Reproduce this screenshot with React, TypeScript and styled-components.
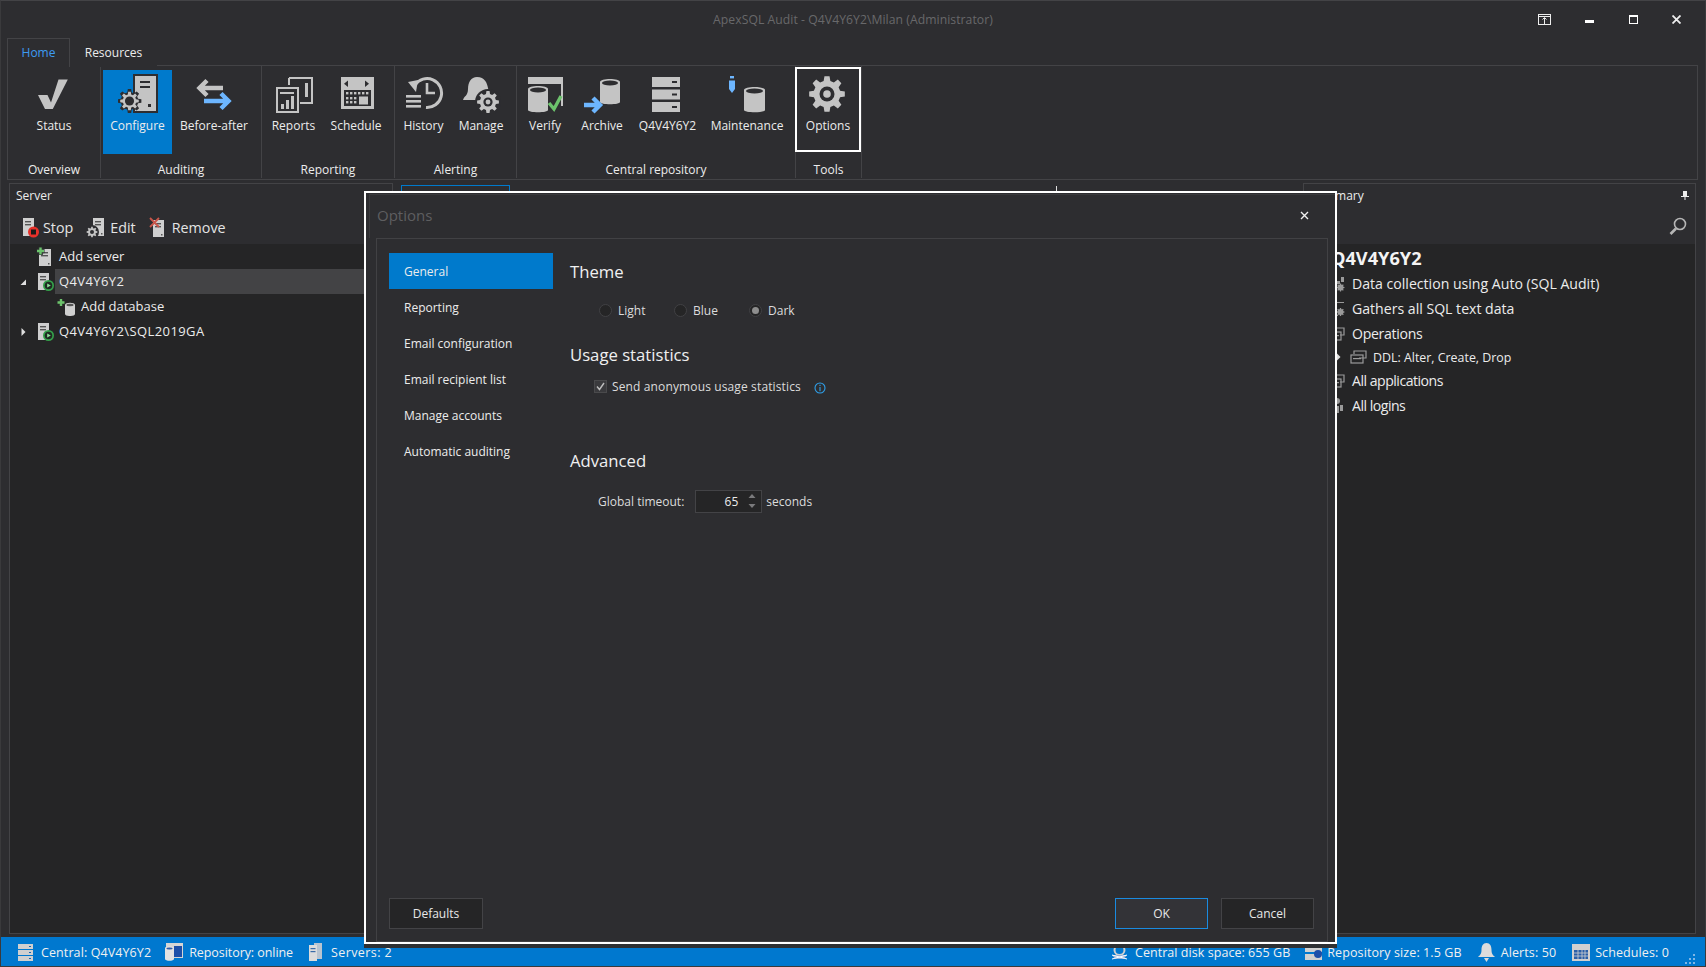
import React from "react";
import styled, { createGlobalStyle } from "styled-components";

const G = "#c4c4c4";
const D = "#2d2d30";
const BLUE = "#6db6ff";
const GREEN = "#6cc26c";

const Global = createGlobalStyle`
  html, body { margin: 0; padding: 0; background: #2d2d30; overflow: hidden; }
  * { box-sizing: border-box; }
  body { font-family: "Open Sans", "Noto Sans", "Liberation Sans", sans-serif; color: #ececec; }
`;

const gearPath = (cx: number, cy: number, ro: number, ri: number, n: number) => {
  const pts: string[] = [];
  const step = (Math.PI * 2) / n;
  for (let i = 0; i < n; i++) {
    const a = i * step - Math.PI / 2;
    const p = (r: number, t: number) =>
      `${(cx + r * Math.cos(a + t * step)).toFixed(2)} ${(cy + r * Math.sin(a + t * step)).toFixed(2)}`;
    pts.push(p(ri, -0.32), p(ro, -0.18), p(ro, 0.18), p(ri, 0.32));
  }
  return "M" + pts.join("L") + "Z";
};

const Gear = ({ cx, cy, r, fill = G, hole = D, outline }: { cx: number; cy: number; r: number; fill?: string; hole?: string; outline?: string }) => (
  <g>
    <path d={gearPath(cx, cy, r, r * 0.74, 8)} fill={outline ? outline : fill} />
    {outline && <path d={gearPath(cx, cy, r * 0.78, r * 0.56, 8)} fill={fill} />}
    <circle cx={cx} cy={cy} r={r * (outline ? 0.38 : 0.42)} fill={hole} />
    {!outline && <circle cx={cx} cy={cy} r={r * 0.22} fill={fill} />}
  </g>
);

const Cylinder = ({ x, y, w, h, fill = G }: { x: number; y: number; w: number; h: number; fill?: string }) => (
  <g>
    <path d={`M${x} ${y + 3}C${x} ${y - 1} ${x + w} ${y - 1} ${x + w} ${y + 3}V${y + h - 2}C${x + w} ${y + h + 1} ${x} ${y + h + 1} ${x} ${y + h - 2}Z`} fill={fill} />
    <ellipse cx={x + w / 2} cy={y + 4} rx={w / 2 - 2} ry={2.4} fill={D} />
  </g>
);

const RibbonIcon = styled.svg`
  display: block;
  width: 40px;
  height: 40px;
  flex: none;
`;

const StatusIcon = () => (
  <RibbonIcon viewBox="0 0 40 40">
    <path d="M4 21H13.5L17 28.5L24.5 5.5H33.8L18.8 35H11Z" fill={G} />
  </RibbonIcon>
);
const ConfigureIcon = () => (
  <RibbonIcon viewBox="0 0 40 40">
    <rect x="15" y="0" width="25" height="39" fill={D} />
    <rect x="17" y="2" width="21" height="35" fill={G} />
    <rect x="22" y="7" width="10" height="2" fill={D} />
    <rect x="22" y="12" width="10" height="2" fill={D} />
    <rect x="30" y="30" width="3" height="3" fill={D} />
    <Gear cx={11.5} cy={27} r={12} outline={D} hole={D} />
  </RibbonIcon>
);
const BeforeAfterIcon = () => (
  <RibbonIcon viewBox="0 0 40 40">
    <path d="M29 14H7M13 6.5L5.5 14L13 21.5" fill="none" stroke={G} strokeWidth="4.5" />
    <path d="M10 27H35M27 19.5L34.5 27L27 34.5" fill="none" stroke={BLUE} strokeWidth="4.5" />
  </RibbonIcon>
);
const ReportsIcon = () => (
  <RibbonIcon viewBox="0 0 40 40">
    <path d="M15 4H38V29H26" fill="none" stroke={G} strokeWidth="2" />
    <path d="M15 4V11" fill="none" stroke={G} strokeWidth="2" />
    <rect x="31" y="9" width="3" height="14" fill={G} />
    <rect x="3" y="14" width="21" height="24" fill={D} stroke={G} strokeWidth="2" />
    <rect x="6" y="18" width="14" height="2" fill={G} />
    <rect x="17" y="22" width="3" height="13" fill={G} />
    <rect x="12" y="26" width="3" height="9" fill={G} />
    <rect x="7" y="30" width="3" height="5" fill={G} />
  </RibbonIcon>
);
const ScheduleIcon = () => (
  <RibbonIcon viewBox="0 0 40 40">
    <rect x="5" y="3" width="33" height="32" fill={G} />
    <path d="M12 6.5L12 13L8 9.7Z" fill={D} />
    <path d="M29 6.5L29 13L33 9.7Z" fill={D} />
    <rect x="8" y="16" width="27" height="16" fill={D} />
    {[10, 14, 18, 22, 26, 30].map((x) => (
      <rect key={x} x={x} y="18" width="2.4" height="2.4" fill={G} />
    ))}
    {[10, 14, 18].map((x) => (
      <rect key={x} x={x} y="23" width="2.4" height="2.4" fill={G} />
    ))}
    {[10, 14, 18].map((x) => (
      <rect key={x} x={x} y="27" width="2.4" height="2.4" fill={G} />
    ))}
    <rect x="23" y="22.5" width="9" height="8" fill={G} />
  </RibbonIcon>
);
const HistoryIcon = () => (
  <RibbonIcon viewBox="0 0 40 40">
    <path d="M11 11A14.5 14.5 0 1 1 22 33.5" fill="none" stroke={G} strokeWidth="3" />
    <path d="M4 8L14 6L12 18Z" fill={G} />
    <path d="M23 9V19H31" fill="none" stroke={G} strokeWidth="2.6" />
    <rect x="2" y="21" width="15" height="2.6" fill={G} />
    <rect x="2" y="26" width="15" height="2.6" fill={G} />
    <rect x="2" y="31" width="15" height="2.6" fill={G} />
  </RibbonIcon>
);
const ManageIcon = () => (
  <RibbonIcon viewBox="0 0 40 40">
    <path d="M16 3C24 3 26 9 27 14C28 20 31 22 32 26H2C3 22 7 22 7 15C7 8 10 3 16 3Z" fill={G} />
    <circle cx="27" cy="28" r="13" fill={D} />
    <Gear cx={27} cy={28} r={11} />
  </RibbonIcon>
);
const VerifyIcon = () => (
  <RibbonIcon viewBox="0 0 40 40">
    <rect x="3" y="3" width="35" height="7" fill={G} />
    <path d="M37 10V32" stroke={G} strokeWidth="2" />
    <Cylinder x={3} y={12} w={20} h={26} />
    <path d="M24 29L29 35L36 22" fill="none" stroke={GREEN} strokeWidth="3.4" />
  </RibbonIcon>
);
const ArchiveIcon = () => (
  <RibbonIcon viewBox="0 0 40 40">
    <Cylinder x={18} y={5} w={20} h={25} />
    <path d="M2 31H16M11 24L18 31L11 38" fill="none" stroke={BLUE} strokeWidth="4.4" />
  </RibbonIcon>
);
const CentralIcon = () => (
  <RibbonIcon viewBox="0 0 40 40">
    {[3, 15.5, 28].map((y) => (
      <g key={y}>
        <rect x="4" y={y} width="28" height="10" fill={G} />
        <rect x="24" y={y + 4} width="5" height="2" fill={D} />
      </g>
    ))}
  </RibbonIcon>
);
const MaintenanceIcon = () => (
  <RibbonIcon viewBox="0 0 40 40">
    <rect x="3" y="2" width="4" height="2.4" fill={BLUE} />
    <path d="M2 6.5H8V15L5 19L2 15Z" fill={BLUE} />
    <Cylinder x={17} y={13} w={21} h={25} />
  </RibbonIcon>
);
const OptionsIcon = () => (
  <RibbonIcon viewBox="0 0 40 40">
    <path d={gearPath(19, 20, 18, 13.5, 8)} fill={G} />
    <circle cx="19" cy="20" r="7.5" fill={D} />
    <circle cx="19" cy="20" r="3.8" fill={G} />
  </RibbonIcon>
);

const SmallSvg = styled.svg<{ $w?: number; $h?: number }>`
  display: block;
  flex: none;
  width: ${(p) => p.$w ?? 18}px;
  height: ${(p) => p.$h ?? 20}px;
`;

const ServerShape = ({ x = 0, y = 0, w = 12, h = 18 }: { x?: number; y?: number; w?: number; h?: number }) => (
  <g>
    <rect x={x} y={y} width={w} height={h} fill="#cfcfcf" />
    <rect x={x + 2} y={y + 3} width={w - 5} height="1.4" fill="#555" />
    <rect x={x + 2} y={y + 6} width={w - 5} height="1.4" fill="#555" />
    <rect x={x + w - 3} y={y + h - 3} width="1.5" height="1.5" fill="#555" />
  </g>
);

const StopIcon = () => (
  <SmallSvg $w={16} $h={21} viewBox="0 0 16 21">
    <ServerShape x={0} y={1} w={11} h={18} />
    <circle cx="10.5" cy="15" r="5.5" fill="#e8312a" />
    <rect x="8" y="12.5" width="5" height="5" fill="#1a1a1a" />
  </SmallSvg>
);
const EditIcon = () => (
  <SmallSvg $w={19} $h={21} viewBox="0 0 19 21">
    <ServerShape x={7} y={1} w={11} h={18} />
    <circle cx="6" cy="15" r="7" fill="#2d2d30" />
    <path d={gearPath(6, 15, 5.4, 4, 8)} fill={G} />
    <circle cx="6" cy="15" r="2" fill="#2d2d30" />
  </SmallSvg>
);
const RemoveIcon = () => (
  <SmallSvg $w={16} $h={21} viewBox="0 0 16 21">
    <ServerShape x={4} y={3} w={11} h={17} />
    <path d="M1 1L10 10M10 1L1 10" stroke="#c9564a" strokeWidth="1.8" />
  </SmallSvg>
);
const AddServerIcon = () => (
  <SmallSvg $w={16} $h={19} viewBox="0 0 16 19">
    <ServerShape x={3} y={2} w={12} h={17} />
    <path d="M4.5 0V8M.5 4H8.5" stroke="#2d2d30" strokeWidth="4.6" />
    <path d="M4.5 .5V7.5M1 4H8" stroke={GREEN} strokeWidth="2.4" />
  </SmallSvg>
);
const RunServerIcon = () => (
  <SmallSvg $w={16} $h={19} viewBox="0 0 16 19">
    <ServerShape x={0} y={1} w={11} h={17} />
    <circle cx="10.5" cy="13.5" r="5.5" fill="#35a04a" />
    <circle cx="10.5" cy="13.5" r="3.8" fill="#1f2a22" />
    <path d="M9.2 11.4L12.8 13.5L9.2 15.6Z" fill="#8fe09a" />
  </SmallSvg>
);
const AddDbIcon = () => (
  <SmallSvg $w={19} $h={18} viewBox="0 0 19 18">
    <path d="M4 1V8M.5 4.5H7.5" stroke={GREEN} strokeWidth="2.4" />
    <path d="M8 7C8 4 18 4 18 7V16C18 18.7 8 18.7 8 16Z" fill="#cfcfcf" />
    <ellipse cx="13" cy="7" rx="3.6" ry="1.2" fill="#555" />
  </SmallSvg>
);

const StripIcon = ({ w, h, children }: { w: number; h: number; children: React.ReactNode }) => (
  <SmallSvg $w={w} $h={h} viewBox={`0 0 ${w} ${h}`}>
    {children}
  </SmallSvg>
);

const tree12 = "#9a9a9a";
const DataIcon = () => (
  <StripIcon w={14} h={16}>
    <path d="M1 2h3v5H1zM6 5h3v3H6zM10 1h3v5h-3zM1 9h3v5H1z" fill={tree12} />
    <path d={gearPath(9.5, 11.5, 4, 3, 8)} fill={tree12} />
  </StripIcon>
);
const TextIcon = () => (
  <StripIcon w={14} h={16}>
    <path d="M1 1h12v1H1zM1 14h6v1H1zM1 4h5v1H1zM1 7h4v1H1z" fill={tree12} />
    <path d={gearPath(9.5, 11, 4, 3, 8)} fill={tree12} />
  </StripIcon>
);
const OpsIcon = ({ w = 14 }: { w?: number }) => (
  <StripIcon w={w} h={14}>
    <path d={`M4 4V1H${w - 1}V8H9`} fill="none" stroke={tree12} strokeWidth="1.2" />
    <rect x="1" y="5" width={w - 5} height="8" fill="none" stroke={tree12} strokeWidth="1.2" />
    <rect x="3" y="8" width={w - 9} height="1.2" fill={tree12} />
  </StripIcon>
);
const LoginIcon = () => (
  <StripIcon w={14} h={17}>
    <circle cx="6" cy="4" r="3" fill={tree12} />
    <path d="M1 9h7v7H1zM9 8h3v6H9z" fill={tree12} />
  </StripIcon>
);

const Window = styled.div`
  position: relative;
  width: 1706px;
  height: 967px;
  background: #2d2d30;
  border-top: 1px solid #434346;
  border-left: 1px solid #3a3a3c;
  border-right: 1px solid #3a3a3c;
  display: flex;
  flex-direction: column;
  overflow: hidden;
`;
const TitleBar = styled.div`
  height: 37px;
  flex: none;
  display: grid;
  grid-template-columns: 1fr auto 1fr;
  align-items: center;
`;
const TitleText = styled.div`
  grid-column: 2;
  font-size: 12.2px;
  color: #68686a;
  letter-spacing: 0.05px;
`;
const WindowControls = styled.div`
  grid-column: 3;
  justify-self: end;
  display: flex;
  align-items: center;
  padding-right: 24px;
  gap: 34.5px;
  margin-top: -1px;
`;
const TabRow = styled.div`
  height: 28px;
  flex: none;
  display: flex;
  padding-left: 6px;
  position: relative;
  z-index: 1;
`;
const Tab = styled.div<{ $active?: boolean }>`
  height: 29px;
  width: ${(p) => (p.$active ? 63 : 87)}px;
  display: flex;
  align-items: center;
  justify-content: center;
  padding-bottom: 2px;
  font-size: 12px;
  color: ${(p) => (p.$active ? "#3d9bf2" : "#ececec")};
  background: #2d2d30;
  border: 1px solid ${(p) => (p.$active ? "#434346" : "transparent")};
  border-bottom: none;
`;
const Ribbon = styled.div`
  height: 115px;
  flex: none;
  margin: -1px 7px 0 6px;
  border: 1px solid #434346;
  display: flex;
`;
const Group = styled.div<{ $w: number }>`
  width: ${(p) => p.$w}px;
  flex: none;
  display: flex;
  flex-direction: column;
  padding-top: 1px;
  border-right: 1px solid #434346;
  margin-bottom: 1px;
`;
const GroupButtons = styled.div<{ $pad?: number }>`
  height: 86px;
  display: flex;
  padding-left: ${(p) => p.$pad ?? 0}px;
`;
const GroupLabel = styled.div`
  flex: 1;
  display: flex;
  align-items: center;
  justify-content: center;
  font-size: 12px;
  color: #ececec;
  padding-top: 8px;
`;
const RibbonButton = styled.div<{ $w: number; $active?: boolean; $focus?: boolean }>`
  width: ${(p) => p.$w}px;
  height: ${(p) => (p.$focus ? 85 : 84)}px;
  margin-top: ${(p) => (p.$focus ? 0 : 3)}px;
  margin-left: ${(p) => (p.$focus ? -1 : 0)}px;
  flex: none;
  display: flex;
  flex-direction: column;
  align-items: center;
  padding-top: ${(p) => (p.$focus ? 5 : 4)}px;
  font-size: 12px;
  color: #ececec;
  background: ${(p) => (p.$active ? "#007acc" : "transparent")};
  border: ${(p) => (p.$focus ? "2px solid #fff" : "none")};
  white-space: nowrap;
`;
const ButtonText = styled.span`
  margin-top: 3px;
  line-height: 18px;
`;
const Main = styled.div`
  flex: 1;
  min-height: 0;
  display: flex;
  margin: 3px 9px 3px 8px;
`;
const Panel = styled.div<{ $w: number }>`
  width: ${(p) => p.$w}px;
  flex: none;
  border: 1px solid #434346;
  display: flex;
  flex-direction: column;
`;
const PanelHeader = styled.div`
  height: 22px;
  flex: none;
  display: flex;
  align-items: center;
  justify-content: space-between;
  font-size: 12px;
  padding: 0 6px;
`;
const PanelToolbar = styled.div`
  height: 38px;
  flex: none;
  display: flex;
  align-items: center;
  padding-top: 4px;
`;
const ToolItem = styled.div<{ $ml: number; $gap: number }>`
  display: flex;
  align-items: center;
  gap: ${(p) => p.$gap}px;
  margin-left: ${(p) => p.$ml}px;
  font-size: 14.3px;
  color: #e4e4e4;
`;
const SearchGlyph = styled.svg`
  width: 18px;
  height: 18px;
  flex: none;
  margin-right: 8px;
  margin-top: -2px;
`;
const PanelBody = styled.div`
  flex: 1;
  background: #252526;
`;
const TreeRow = styled.div<{ $indent?: number }>`
  height: 25px;
  display: flex;
  align-items: center;
  padding-left: ${(p) => p.$indent ?? 0}px;
  font-size: 13px;
  color: #ececec;
`;
const Expander = styled.div`
  width: 28px;
  flex: none;
  display: flex;
  justify-content: center;
  padding-right: 1px;
`;
const TreeIconSlot = styled.div<{ $w: number }>`
  width: ${(p) => p.$w}px;
  flex: none;
`;
const TreeLabel = styled.div<{ $selected?: boolean; $name?: boolean }>`
  flex: 1;
  height: 100%;
  display: flex;
  align-items: center;
  padding: 0 0 2px 4px;
  letter-spacing: ${(p) => (p.$name ? 0.4 : 0)}px;
  background: ${(p) => (p.$selected ? "#434345" : "transparent")};
`;
const Center = styled.div`
  flex: 1;
  display: flex;
  align-items: flex-start;
  padding-left: 8px;
`;
const CenterTab = styled.div`
  width: 109px;
  height: 30px;
  margin-top: 2px;
  border: 1px solid #007acc;
`;
const CenterTick = styled.div`
  width: 1px;
  height: 6px;
  margin-left: 546px;
  margin-top: 3px;
  background: #ddd;
`;
const SummaryTitle = styled.div`
  font-size: 18.2px;
  font-weight: 700;
  color: #f4f4f4;
  padding-left: 27px;
  height: 27px;
  display: flex;
  align-items: center;
`;
const SummaryRow = styled.div<{ $small?: boolean; $tight?: number }>`
  height: ${(p) => (p.$small ? 22 : 25)}px;
  display: flex;
  align-items: center;
  padding-left: ${(p) => (p.$small ? 31 : 27)}px;
  gap: ${(p) => (p.$small ? 6 : 7)}px;
  font-size: ${(p) => (p.$small ? 12.4 : 14.1)}px;
  letter-spacing: ${(p) => p.$tight ?? 0}px;
  color: #ececec;
`;
const SummaryArrow = styled.div`
  width: 9px;
  flex: none;
`;
const StatusBar = styled.div`
  height: 30px;
  flex: none;
  background: #0078cf;
  border-bottom: 1px solid #3a3a3c;
  display: flex;
  align-items: center;
  font-size: 12.5px;
  color: #f0f0f0;
  padding-top: 1px;
`;
const StatusItem = styled.div<{ $ml: number; $gap: number; $track?: number }>`
  display: flex;
  align-items: center;
  margin-left: ${(p) => p.$ml}px;
  gap: ${(p) => p.$gap}px;
  letter-spacing: ${(p) => p.$track ?? 0.1}px;
  white-space: nowrap;
`;
const Spacer = styled.div`
  flex: 1;
`;
const Grip = styled.svg`
  width: 14px;
  height: 12px;
  margin-left: 14px;
  margin-right: 8px;
  margin-top: 14px;
  flex: none;
`;
const Dialog = styled.div`
  position: absolute;
  left: 363px;
  top: 190px;
  width: 973px;
  height: 753px;
  background: #2d2d30;
  border: 2px solid #fff;
  box-shadow: 0 4px 0 0 #2e3033;
  display: flex;
  flex-direction: column;
`;
const DialogTitleBar = styled.div`
  height: 44px;
  flex: none;
  display: flex;
  align-items: center;
  justify-content: space-between;
  margin-left: 3px;
  border-left: 1px solid #3a3a3d;
  border-top: 1px solid #3a3a3d;
  padding: 0 26px 3px 7px;
  margin-top: 1px;
`;
const DialogTitle = styled.div`
  font-size: 15px;
  color: #5e5e60;
`;
const DialogFrame = styled.div`
  flex: 1;
  min-height: 0;
  margin-left: 10px;
  margin-right: 7px;
  border: 1px solid #414144;
  display: flex;
  flex-direction: column;
`;
const DialogMain = styled.div`
  flex: 1;
  display: flex;
  padding: 14px 0 0 12px;
`;
const Nav = styled.div`
  width: 164px;
  flex: none;
`;
const NavItem = styled.div<{ $active?: boolean }>`
  height: 36px;
  display: flex;
  align-items: center;
  padding-left: 15px;
  font-size: 12px;
  color: #ececec;
  background: ${(p) => (p.$active ? "#007acc" : "transparent")};
`;
const Content = styled.div`
  padding: 6px 0 0 17px;
`;
const Heading = styled.div<{ $mt?: number }>`
  height: 24px;
  display: flex;
  align-items: center;
  margin-top: ${(p) => p.$mt ?? 0}px;
  font-size: 16.7px;
  color: #f0f0f0;
`;
const RadioRow = styled.div`
  margin-top: 15px;
  height: 24px;
  display: flex;
  align-items: center;
  padding-left: 29px;
`;
const RadioItem = styled.div`
  width: 75px;
  display: flex;
  align-items: center;
  gap: 6px;
  font-size: 12px;
  color: #dcdcdc;
`;
const RadioCircle = styled.div<{ $on?: boolean }>`
  width: 13px;
  height: 13px;
  border-radius: 50%;
  background: #252526;
  border: 1px solid #414144;
  display: flex;
  align-items: center;
  justify-content: center;
  &::after {
    content: "";
    width: 7px;
    height: 7px;
    border-radius: 50%;
    background: ${(p) => (p.$on ? "#8e8e8e" : "transparent")};
  }
`;
const CheckRow = styled.div`
  margin-top: 10px;
  height: 20px;
  display: flex;
  align-items: center;
  padding-left: 24px;
  font-size: 12px;
  letter-spacing: 0.13px;
  color: #dcdcdc;
`;
const CheckBox = styled.div`
  width: 13px;
  height: 13px;
  background: #3a3a3d;
  border: 1px solid #4a4a4c;
  display: flex;
  align-items: center;
  justify-content: center;
  margin-right: 5px;
`;
const InfoIcon = styled.svg`
  width: 12px;
  height: 12px;
  margin-left: 13px;
  margin-top: 3px;
`;
const TimeoutRow = styled.div`
  margin-top: 17px;
  height: 24px;
  display: flex;
  align-items: center;
  padding-left: 28px;
  font-size: 12px;
  color: #dcdcdc;
`;
const Spinner = styled.div`
  width: 67px;
  height: 23px;
  margin: 0 4px 0 11px;
  background: #252526;
  border: 1px solid #434346;
  display: flex;
  align-items: center;
  justify-content: flex-end;
  color: #ececec;
  padding-right: 4px;
`;
const SpinnerValue = styled.span`
  margin-right: 9px;
`;
const Footer = styled.div`
  height: 43px;
  flex: none;
  display: flex;
  align-items: flex-start;
  padding: 0 13px 0 12px;
`;
const Button = styled.div<{ $primary?: boolean; $ml?: number; $w?: number }>`
  width: ${(p) => p.$w ?? 94}px;
  height: 31px;
  margin-left: ${(p) => p.$ml ?? 0}px;
  display: flex;
  align-items: center;
  justify-content: center;
  font-size: 12px;
  color: #e8e8e8;
  background: ${(p) => (p.$primary ? "#333337" : "#252526")};
  border: 1px solid ${(p) => (p.$primary ? "#1a8be0" : "#434346")};
`;
const DialogClose = styled.svg`
  width: 9px;
  height: 9px;
`;
const Arrow = styled.svg`
  display: block;
  width: 7px;
  height: 8px;
`;

const ArrowDown = () => (
  <Arrow viewBox="0 0 7 8"><path d="M6 1.5V7H.5Z" fill="#e0e0e0" /></Arrow>
);
const ArrowRight = () => (
  <Arrow viewBox="0 0 7 8"><path d="M1.5 0L5.5 4L1.5 8Z" fill="#e0e0e0" /></Arrow>
);

const Ctl = styled.svg<{ $w: number; $h: number }>`
  width: ${(p) => p.$w}px;
  height: ${(p) => p.$h}px;
  flex: none;
  display: block;
`;

export default function App() {
  return (
    <Window>
      <Global />
      <TitleBar>
        <TitleText>ApexSQL Audit - Q4V4Y6Y2\Milan (Administrator)</TitleText>
        <WindowControls>
          <Ctl $w={13} $h={11} viewBox="0 0 13 11">
            <rect x=".5" y=".5" width="12" height="10" fill="none" stroke="#eee" />
            <path d="M.5 2.5H12.5M6.5 11V4M4.5 5.5L6.5 3.5L8.5 5.5" fill="none" stroke="#eee" />
          </Ctl>
          <Ctl $w={9} $h={9} viewBox="0 0 9 9">
            <rect x="0" y="5" width="9" height="3" fill="#fff" />
          </Ctl>
          <Ctl $w={9} $h={9} viewBox="0 0 9 9">
            <rect x=".5" y=".5" width="8" height="8" fill="none" stroke="#fff" />
            <rect x="0" y="0" width="9" height="2" fill="#fff" />
          </Ctl>
          <Ctl $w={9} $h={9} viewBox="0 0 9 9">
            <path d="M.5 .5L8.5 8.5M8.5 .5L.5 8.5" stroke="#eee" strokeWidth="1.8" />
          </Ctl>
        </WindowControls>
      </TitleBar>
      <TabRow>
        <Tab $active>Home</Tab>
        <Tab>Resources</Tab>
      </TabRow>
      <Ribbon>
        <Group $w={93}>
          <GroupButtons $pad={11}>
            <RibbonButton $w={70}><StatusIcon /><ButtonText>Status</ButtonText></RibbonButton>
          </GroupButtons>
          <GroupLabel>Overview</GroupLabel>
        </Group>
        <Group $w={161}>
          <GroupButtons $pad={2}>
            <RibbonButton $w={69} $active><ConfigureIcon /><ButtonText>Configure</ButtonText></RibbonButton>
            <RibbonButton $w={84}><BeforeAfterIcon /><ButtonText>Before-after</ButtonText></RibbonButton>
          </GroupButtons>
          <GroupLabel>Auditing</GroupLabel>
        </Group>
        <Group $w={133}>
          <GroupButtons>
            <RibbonButton $w={63}><ReportsIcon /><ButtonText>Reports</ButtonText></RibbonButton>
            <RibbonButton $w={62}><ScheduleIcon /><ButtonText>Schedule</ButtonText></RibbonButton>
          </GroupButtons>
          <GroupLabel>Reporting</GroupLabel>
        </Group>
        <Group $w={122}>
          <GroupButtons>
            <RibbonButton $w={57}><HistoryIcon /><ButtonText>History</ButtonText></RibbonButton>
            <RibbonButton $w={58}><ManageIcon /><ButtonText>Manage</ButtonText></RibbonButton>
          </GroupButtons>
          <GroupLabel>Alerting</GroupLabel>
        </Group>
        <Group $w={279}>
          <GroupButtons $pad={1}>
            <RibbonButton $w={54}><VerifyIcon /><ButtonText>Verify</ButtonText></RibbonButton>
            <RibbonButton $w={60}><ArchiveIcon /><ButtonText>Archive</ButtonText></RibbonButton>
            <RibbonButton $w={71}><CentralIcon /><ButtonText>Q4V4Y6Y2</ButtonText></RibbonButton>
            <RibbonButton $w={88}><MaintenanceIcon /><ButtonText>Maintenance</ButtonText></RibbonButton>
          </GroupButtons>
          <GroupLabel>Central repository</GroupLabel>
        </Group>
        <Group $w={66}>
          <GroupButtons>
            <RibbonButton $w={66} $focus><OptionsIcon /><ButtonText>Options</ButtonText></RibbonButton>
          </GroupButtons>
          <GroupLabel>Tools</GroupLabel>
        </Group>
      </Ribbon>
      <Main>
        <Panel $w={384}>
          <PanelHeader>Server</PanelHeader>
          <PanelToolbar>
            <ToolItem $ml={13} $gap={4}><StopIcon />Stop</ToolItem>
            <ToolItem $ml={13} $gap={5}><EditIcon />Edit</ToolItem>
            <ToolItem $ml={13} $gap={7}><RemoveIcon />Remove</ToolItem>
          </PanelToolbar>
          <PanelBody>
            <TreeRow $indent={26}>
              <TreeIconSlot $w={19}><AddServerIcon /></TreeIconSlot>
              <TreeLabel>Add server</TreeLabel>
            </TreeRow>
            <TreeRow>
              <Expander><ArrowDown /></Expander>
              <TreeIconSlot $w={17}><RunServerIcon /></TreeIconSlot>
              <TreeLabel $selected $name>Q4V4Y6Y2</TreeLabel>
            </TreeRow>
            <TreeRow $indent={47}>
              <TreeIconSlot $w={20}><AddDbIcon /></TreeIconSlot>
              <TreeLabel>Add database</TreeLabel>
            </TreeRow>
            <TreeRow>
              <Expander><ArrowRight /></Expander>
              <TreeIconSlot $w={17}><RunServerIcon /></TreeIconSlot>
              <TreeLabel $name>Q4V4Y6Y2\SQL2019GA</TreeLabel>
            </TreeRow>
          </PanelBody>
        </Panel>
        <Center>
          <CenterTab />
          <CenterTick />
        </Center>
        <Panel $w={393}>
          <PanelHeader>
            <span>Summary</span>
            <Ctl $w={8} $h={9} viewBox="0 0 8 9">
              <path d="M2 0H6V5H8V6H4.5V9H3.5V6H0V5H2Z" fill="#eee" />
            </Ctl>
          </PanelHeader>
          <PanelToolbar>
            <Spacer />
            <SearchGlyph viewBox="0 0 18 18">
              <circle cx="11" cy="7" r="5.5" fill="none" stroke="#b5b5b5" strokeWidth="1.6" />
              <path d="M7 11.5L1.5 17" stroke="#b5b5b5" strokeWidth="2.6" />
            </SearchGlyph>
          </PanelToolbar>
          <PanelBody>
            <SummaryTitle>Q4V4Y6Y2</SummaryTitle>
            <SummaryRow><DataIcon />Data collection using Auto (SQL Audit)</SummaryRow>
            <SummaryRow><TextIcon />Gathers all SQL text data</SummaryRow>
            <SummaryRow $tight={-0.3}><OpsIcon />Operations</SummaryRow>
            <SummaryRow $small><SummaryArrow><ArrowRight /></SummaryArrow><OpsIcon w={17} />DDL: Alter, Create, Drop</SummaryRow>
            <SummaryRow $tight={-0.5}><OpsIcon />All applications</SummaryRow>
            <SummaryRow $tight={-0.5}><LoginIcon />All logins</SummaryRow>
          </PanelBody>
        </Panel>
      </Main>
      <StatusBar>
        <StatusItem $ml={17} $gap={8}>
          <StripIcon w={15} h={18}>
            {[1, 7, 13].map((y) => (
              <g key={y}>
                <rect x="0" y={y} width="15" height="5" fill="#d0d0d0" />
                <rect x="11" y={y + 2} width="2" height="1" fill="#1466b0" />
              </g>
            ))}
          </StripIcon>
          Central: Q4V4Y6Y2
        </StatusItem>
        <StatusItem $ml={14} $gap={6} $track={-0.07}>
          <StripIcon w={18} h={18}>
            <rect x="1" y="0" width="17" height="15" fill="#d5d5d5" />
            <rect x="9" y="3" width="8" height="11" fill="#1d4fa8" />
            <path d="M0 5C0 3 9 3 9 5V16C9 18.4 0 18.4 0 16Z" fill="#e2e2e2" />
            <ellipse cx="4.5" cy="5.5" rx="3.2" ry="1" fill="#2f5ba8" />
          </StripIcon>
          Repository: online
        </StatusItem>
        <StatusItem $ml={16} $gap={9} $track={0.4}>
          <StripIcon w={13} h={18}>
            <rect x="5" y="0" width="8" height="16" fill="#b8c4d0" />
            <rect x="0" y="2" width="8" height="16" fill="#dcdcdc" />
            <rect x="1.5" y="5" width="5" height="1.2" fill="#3a6ca8" />
            <rect x="1.5" y="8" width="5" height="1.2" fill="#3a6ca8" />
          </StripIcon>
          Servers: 2
        </StatusItem>
        <Spacer />
        <StatusItem $ml={0} $gap={7} $track={0.05}>
          <StripIcon w={17} h={16}>
            <circle cx="8.5" cy="6" r="5" fill="none" stroke="#d0d0d0" strokeWidth="2" />
            <path d="M1 11H16L13 15H4Z" fill="#8fb0dc" />
            <path d="M1 11L16 15M16 11L1 15" stroke="#fff" strokeWidth="1" />
          </StripIcon>
          Central disk space: 655 GB
        </StatusItem>
        <StatusItem $ml={15} $gap={5}>
          <StripIcon w={17} h={15}>
            <rect x="0" y="1" width="17" height="6" fill="#d0d0d0" />
            <rect x="0" y="9" width="17" height="6" fill="#d0d0d0" />
            <circle cx="13" cy="9" r="4" fill="#1d4fa8" />
          </StripIcon>
          Repository size: 1.5 GB
        </StatusItem>
        <StatusItem $ml={16} $gap={6}>
          <StripIcon w={17} h={19}>
            <path d="M8.5 0C12 0 13.5 3 13.5 7C13.5 11 15 12 17 14H0C2 12 3.5 11 3.5 7C3.5 3 5 0 8.5 0Z" fill="#dcdcdc" />
            <path d="M6 15H11L8.5 19Z" fill="#dcdcdc" />
          </StripIcon>
          Alerts: 50
        </StatusItem>
        <StatusItem $ml={16} $gap={5}>
          <StripIcon w={18} h={17}>
            <rect x="0" y="0" width="18" height="17" fill="#d0d0d0" />
            <rect x="2" y="6" width="14" height="9" fill="#2a5fa8" />
            <path d="M2 9H16M2 12H16M6 6V15M10 6V15M13 6V15" stroke="#d0d0d0" strokeWidth=".8" />
          </StripIcon>
          Schedules: 0
        </StatusItem>
        <Grip viewBox="0 0 14 12">
          {[[10, 9], [6, 9], [2, 9], [10, 5], [6, 5], [10, 1]].map(([x, y]) => (
            <rect key={`${x}-${y}`} x={x} y={y} width="2" height="2" fill="#7fb6e6" />
          ))}
        </Grip>
      </StatusBar>
      <Dialog>
        <DialogTitleBar>
          <DialogTitle>Options</DialogTitle>
          <DialogClose viewBox="0 0 9 9">
            <path d="M1 1L8 8M8 1L1 8" stroke="#f0f0f0" strokeWidth="1.4" />
          </DialogClose>
        </DialogTitleBar>
        <DialogFrame>
          <DialogMain>
            <Nav>
              <NavItem $active>General</NavItem>
              <NavItem>Reporting</NavItem>
              <NavItem>Email configuration</NavItem>
              <NavItem>Email recipient list</NavItem>
              <NavItem>Manage accounts</NavItem>
              <NavItem>Automatic auditing</NavItem>
            </Nav>
            <Content>
              <Heading>Theme</Heading>
              <RadioRow>
                <RadioItem><RadioCircle />Light</RadioItem>
                <RadioItem><RadioCircle />Blue</RadioItem>
                <RadioItem><RadioCircle $on />Dark</RadioItem>
              </RadioRow>
              <Heading $mt={20}>Usage statistics</Heading>
              <CheckRow>
                <CheckBox>
                  <Ctl $w={9} $h={9} viewBox="0 0 9 9">
                    <path d="M1 4.5L3.5 7.5L8 1" fill="none" stroke="#bdbdbd" strokeWidth="1.4" />
                  </Ctl>
                </CheckBox>
                Send anonymous usage statistics
                <InfoIcon viewBox="0 0 12 12">
                  <circle cx="6" cy="6" r="5" fill="none" stroke="#2f9fe8" strokeWidth="1.1" />
                  <path d="M6 5V9.2M6 2.8V4" stroke="#2f9fe8" strokeWidth="1.1" />
                </InfoIcon>
              </CheckRow>
              <Heading $mt={52}>Advanced</Heading>
              <TimeoutRow>
                Global timeout:
                <Spinner>
                  <SpinnerValue>65</SpinnerValue>
                  <Ctl $w={10} $h={16} viewBox="0 0 10 16">
                    <path d="M5 1L8.5 5H1.5ZM5 15L1.5 11H8.5Z" fill="#7a7a7c" />
                  </Ctl>
                </Spinner>
                seconds
              </TimeoutRow>
            </Content>
          </DialogMain>
          <Footer>
            <Button>Defaults</Button>
            <Spacer />
            <Button $primary $w={93}>OK</Button>
            <Button $ml={13} $w={93}>Cancel</Button>
          </Footer>
        </DialogFrame>
      </Dialog>
    </Window>
  );
}
